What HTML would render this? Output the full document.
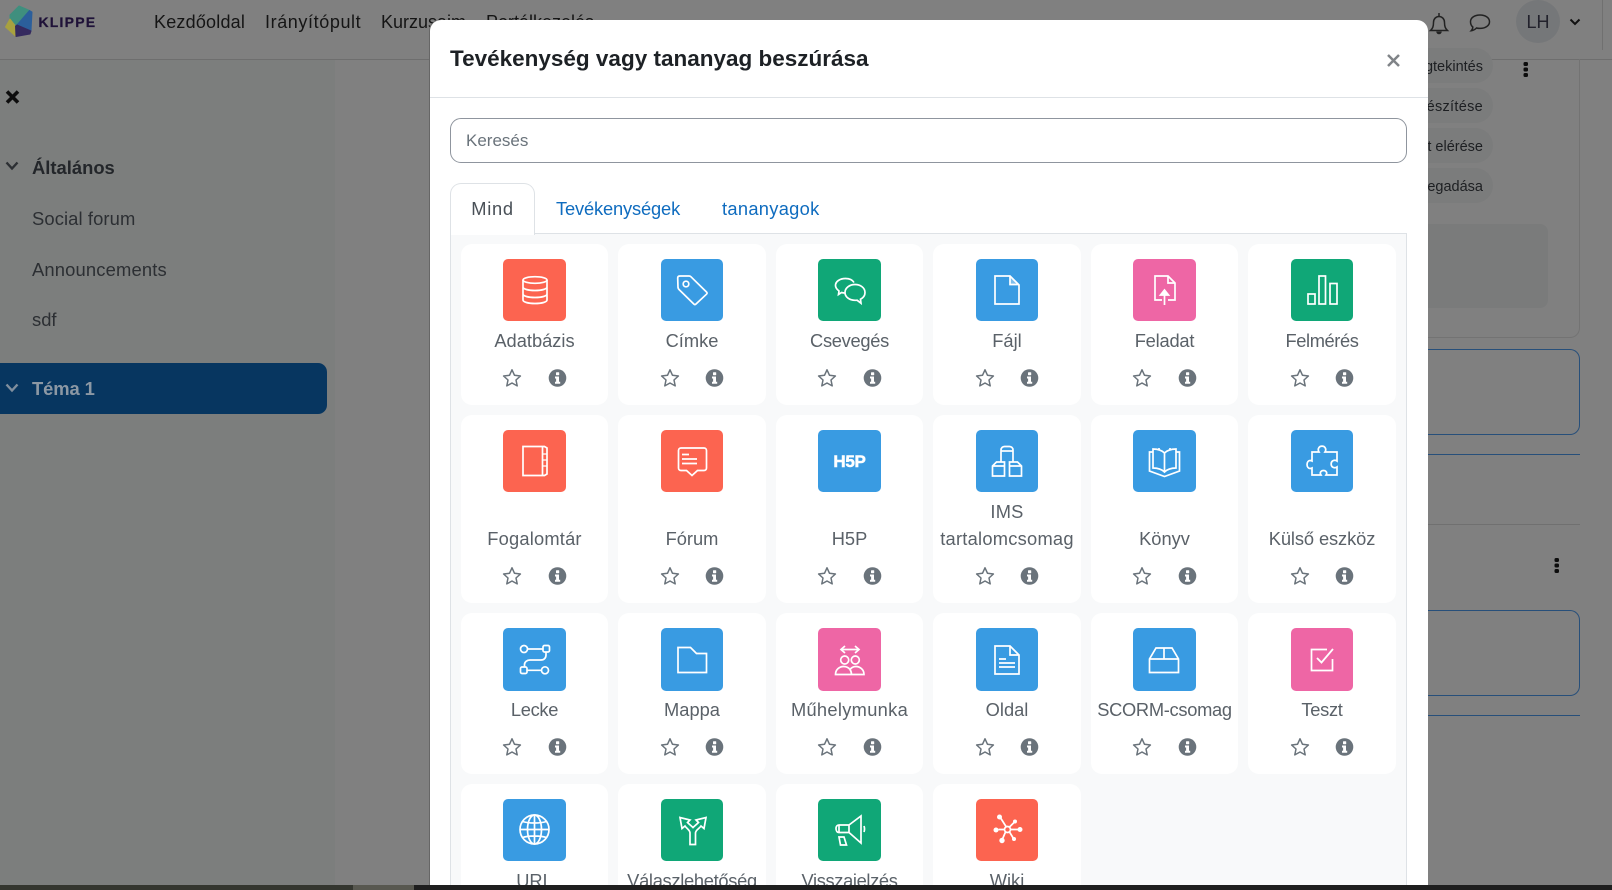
<!DOCTYPE html>
<html lang="hu"><head><meta charset="utf-8"><title>Tevékenység vagy tananyag beszúrása</title>
<style>
html,body{margin:0;padding:0;width:1612px;height:890px;overflow:hidden;background:#808080;font-family:"Liberation Sans",sans-serif}
.a{position:absolute;white-space:nowrap}
#side{left:0;top:60px;width:335px;height:825px;background:#7c7e7d}
#hline{left:0;top:59px;width:1612px;height:1px;background:#6e6e6e}
.nav{top:10px;font-size:18px;line-height:24px;color:#151515}
.sb{left:32px;font-size:18.4px;line-height:24px;color:#2c2f33}
.pill{background:#7b7c7c;border-radius:20px;left:1380px;width:113px;height:35px;top:0;text-align:right;line-height:39px;font-size:14.5px;color:#1d1f22}
.pill span{padding-right:10px}
.bx{left:1400px;width:179px;height:84px;border:1.3px solid #274f7a;border-radius:0 10px 10px 0;border-left:0}
.hl{left:1400px;width:180px;height:1px;background:#274f7a}
#modal{left:430px;top:20px;width:998px;height:865px;background:#fff;border-radius:11px 11px 0 0;overflow:hidden;box-shadow:-1px 0 0 #666}
#modal .in{position:absolute;left:-430px;top:-20px;width:1612px;height:885px;overflow:hidden}
.c{position:absolute;width:147px;background:#fff;border-radius:11px}
.e{width:148px}
.r1{top:244px;height:161px}.r2{top:415px;height:188px}.r3{top:613px;height:161px}.r4{top:784px;height:101px;overflow:hidden;border-radius:11px 11px 0 0}
.t{position:absolute;left:42px;top:15px;width:62.5px;height:62px;border-radius:5px}
.e .t{left:43px;width:61.5px}
.r3 .t{height:63px}
.t svg{display:block;width:62.5px;height:62px;fill:none;stroke:#fff;stroke-width:1.7}
.red{background:#fc6450}.blu{background:#399be2}.grn{background:#10a777}.pnk{background:#ee66a5}
.l{position:absolute;left:-6px;width:159px;text-align:center;font-size:18.3px;line-height:27px;color:#5a6168;top:83px;white-space:nowrap}
.e .l{left:-5.5px}
.r2 .l{top:110px}.r2 .l2{top:83px}.r4 .l{top:83px}
.s,.i{position:absolute;width:20px;height:20px}
.s{left:41px}.i{left:86px}
.e .s{left:41.5px}
.r1 .s,.r1 .i,.r3 .s,.r3 .i{top:123.5px}
.r2 .s,.r2 .i{top:151px}
</style></head><body>
<svg width="0" height="0" style="position:absolute">
<symbol id="star" viewBox="0 0 20 20"><path d="M10 1.8l2.5 5.5 5.9.7-4.4 4 1.2 5.9L10 15l-5.2 2.9L6 12 1.6 8l5.9-.7z" fill="none" stroke="#6a737b" stroke-width="1.5" stroke-linejoin="round"/></symbol>
<symbol id="info" viewBox="0 0 20 20"><circle cx="10.5" cy="10" r="8.8" fill="#6a737b"/><rect x="9" y="4.2" width="3.2" height="3" rx=".6" fill="#fff"/><path d="M8 8.5h4v5.2h1.2v2H8v-2h1.1v-3.2H8z" fill="#fff"/></symbol>
</svg>

<div class="a" id="side"></div>
<div class="a" id="hline"></div>

<!-- logo -->
<svg class="a" style="left:0;top:0" width="40" height="42" viewBox="0 0 40 42" stroke-linejoin="round">
<path d="M19 6L29.500 10.500 17 25 10 22 10 15z" fill="#3f8f7e" stroke="#3f8f7e"/>
<path d="M29.500 10.500L32 12 31 31 17 25z" fill="#2b5f9b" stroke="#2b5f9b"/>
<path d="M5.500 27L10 19 15.500 26 16 36.500z" fill="#a8a13f" stroke="#a8a13f"/>
<path d="M15.500 26L17 25 31 31 30 34 16 36.500z" fill="#352a5f" stroke="#352a5f"/>
</svg>
<div class="a" style="left:38.5px;top:13px;font-size:14px;line-height:18px;font-weight:bold;letter-spacing:1.2px;color:#1f1238;-webkit-text-stroke:.25px #1f1238">KLIPPE</div>

<div class="a nav" style="left:154px;letter-spacing:.2px">Kezdőoldal</div>
<div class="a nav" style="left:265px;letter-spacing:.6px">Irányítópult</div>
<div class="a nav" style="left:381px">Kurzusaim</div>
<div class="a nav" style="left:486px">Portálkezelés</div>

<svg class="a" style="left:1427px;top:11px" width="24" height="24" viewBox="0 0 24 24" fill="none" stroke="#222" stroke-width="1.5"><path d="M3.5 19.5c2-2 3-3.500 3-8 0-3.500 2.300-6 5.500-6s5.500 2.500 5.500 6c0 4.500 1 6 3 8z"/><path d="M10 20.500a2 2 0 0 0 4 0" fill="#222"/><path d="M12 2v3"/></svg>
<svg class="a" style="left:1468px;top:12px" width="24" height="22" viewBox="0 0 24 22" fill="none" stroke="#222" stroke-width="1.5"><path d="M12 3c5.500 0 9.500 2.800 9.500 6.700s-4 6.700-9.500 6.700c-1.300 0-2.400-.1-3.500-.4-1.500 1.500-3 2.500-5.200 2.700 1-1 1.500-2.300 1.500-3.700C3 13.500 2.500 11.700 2.500 9.700 2.500 5.800 6.500 3 12 3z"/></svg>
<div class="a" style="left:1516px;top:0;width:44px;height:43px;border-radius:50%;background:#757779;text-align:center;line-height:45px;font-size:18px;color:#22222c">LH</div>
<svg class="a" style="left:1569px;top:18px" width="12" height="8" viewBox="0 0 12 8" fill="none" stroke="#111" stroke-width="2"><path d="M1.500 1.500L6 6l4.500-4.500"/></svg>
<div class="a" style="left:1602px;top:0;width:1px;height:50px;background:#707070"></div>

<!-- sidebar -->
<svg class="a" style="left:5px;top:90px" width="15" height="14" viewBox="0 0 15 14" fill="none" stroke="#0d0d0d" stroke-width="3.600"><path d="M2 1.500l11 11M13 1.500l-11 11"/></svg>
<svg class="a" style="left:5px;top:161px" width="14" height="10" viewBox="0 0 14 10" fill="none" stroke="#2c2f33" stroke-width="2.400"><path d="M1.500 1.500L7 7.500l5.500-6"/></svg>
<div class="a sb" style="top:155.500px;font-weight:bold;color:#23262a">Általános</div>
<div class="a sb" style="top:207px;letter-spacing:.1px">Social forum</div>
<div class="a sb" style="top:258px;letter-spacing:.15px">Announcements</div>
<div class="a sb" style="top:308px">sdf</div>
<div class="a" style="left:0;top:363px;width:327px;height:51px;background:#073660;border-radius:0 9px 9px 0"></div>
<svg class="a" style="left:5px;top:383px" width="14" height="10" viewBox="0 0 14 10" fill="none" stroke="#808f9e" stroke-width="2.400"><path d="M1.500 1.500L7 7.500l5.500-6"/></svg>
<div class="a sb" style="top:377px;font-weight:bold;color:#8c98a4;letter-spacing:-.1px">Téma 1</div>

<!-- right background content -->
<div class="a" style="left:1400px;top:59px;width:179px;height:278px;border:1px solid #737373;border-left:0;border-top:0;border-radius:0 0 10px 0"></div>
<div class="a pill" style="top:48px"><span>Megtekintés</span></div>
<div class="a pill" style="top:88px;letter-spacing:.3px"><span>készítése</span></div>
<div class="a pill" style="top:128px"><span>Kijelölt elérése</span></div>
<div class="a pill" style="top:168px"><span>Jegy megadása</span></div>
<svg class="a" style="left:1522px;top:60px" width="8" height="18" viewBox="0 0 8 18" fill="#0d0d0d"><rect x="1.500" y="2" width="4.500" height="4" rx="1.500"/><rect x="1.500" y="7.500" width="4.500" height="4" rx="1.500"/><rect x="1.500" y="13" width="4.500" height="4" rx="1.500"/></svg>
<div class="a" style="left:1400px;top:224px;width:148px;height:84px;background:#7a7b7b;border-radius:0 8px 8px 0"></div>
<div class="a bx" style="top:349px"></div>
<div class="a hl" style="top:454px"></div>
<div class="a" style="left:1400px;top:524px;width:180px;height:1px;background:#707070"></div>
<svg class="a" style="left:1553px;top:557px" width="8" height="18" viewBox="0 0 8 18" fill="#0d0d0d"><rect x="1.500" y="1" width="4.500" height="4" rx="1.500"/><rect x="1.500" y="6.500" width="4.500" height="4" rx="1.500"/><rect x="1.500" y="12" width="4.500" height="4" rx="1.500"/></svg>
<div class="a bx" style="top:610px"></div>
<div class="a hl" style="top:715px"></div>

<!-- modal -->
<div class="a" id="modal"><div class="in">
<div class="a" style="left:450px;top:44px;font-size:22.500px;line-height:30px;font-weight:bold;color:#1d2125">Tevékenység vagy tananyag beszúrása</div>
<svg class="a" style="left:1387px;top:54px" width="13" height="13" viewBox="0 0 13 13" fill="none" stroke="#808488" stroke-width="2.500"><path d="M1 1l11 11M12 1L1 12"/></svg>
<div class="a" style="left:430px;top:97px;width:998px;height:1px;background:#dee2e6"></div>
<div class="a" style="left:450px;top:118px;width:955px;height:43px;border:1.300px solid #8f959e;border-radius:11px;line-height:44px;font-size:17px;color:#6a737b;text-indent:15px">Keresés</div>

<div class="a" style="left:450px;top:233px;width:955px;height:652px;background:#f8f9fa;border:1px solid #dee2e6;border-bottom:0"></div>
<div class="a" style="left:450px;top:183px;width:83px;height:51px;border:1px solid #dee2e6;border-bottom:0;border-radius:11px 11px 0 0;background:#fff;text-align:center;line-height:50px;font-size:18.300px;letter-spacing:.7px;color:#495057">Mind</div>
<div class="a" style="left:556px;top:183px;line-height:52px;font-size:18.300px;letter-spacing:-.15px;color:#0f6cbf">Tevékenységek</div>
<div class="a" style="left:722px;top:183px;line-height:52px;font-size:18.300px;letter-spacing:.3px;color:#0f6cbf">tananyagok</div>

<!-- row 1 -->
<div class="c r1" style="left:461px"><div class="t red"><svg viewBox="0 0 62.500 62"><ellipse cx="32" cy="21" rx="12" ry="3.300"/><path d="M20 21v20c0 2 5 3.500 12 3.500s12-1.500 12-3.500V21M20 28c0 2 5 3.500 12 3.500S44 30 44 28M20 35c0 2 5 3.500 12 3.500S44 37 44 35"/></svg></div><div class="l">Adatbázis</div><svg class="s"><use href="#star"/></svg><svg class="i"><use href="#info"/></svg></div>
<div class="c e r1" style="left:618px"><div class="t blu"><svg viewBox="0 0 62.500 62"><path d="M19 17h9c1 0 1.500.3 2 .8L45.500 33c.7.700.7 1.500 0 2.200L35 45c-.7.700-1.500.7-2.200 0L18 30.500c-.6-.6-.9-1.200-1-2l-.3-9.500c0-1.300 1-2 2.300-2z"/><circle cx="25" cy="25" r="2.800"/></svg></div><div class="l">Címke</div><svg class="s"><use href="#star"/></svg><svg class="i"><use href="#info"/></svg></div>
<div class="c r1" style="left:776px"><div class="t grn"><svg viewBox="0 0 62.500 62"><path d="M27 34c-1.500 0-2.500-.2-3.500-.5l-3 2 .5-3.500c-2-1.500-3.500-3.300-3.500-5.500 0-4 4.300-7 10-7 3.700 0 7 1.500 8.500 4"/><path d="M37 25.500c5.500 0 10 3.300 10 8 0 3-1.800 5.300-4.500 6.700l.5 4-4-3c-.7.100-1.300.1-2 .1-5.500 0-10-3.300-10-7.800s4.500-8 10-8z"/></svg></div><div class="l" style="letter-spacing:-.3px">Csevegés</div><svg class="s"><use href="#star"/></svg><svg class="i"><use href="#info"/></svg></div>
<div class="c e r1" style="left:933px"><div class="t blu"><svg viewBox="0 0 62.500 62"><path d="M19 17h15l9 9v19H19z"/><path d="M34 17v8.500h9" fill="#fff" fill-opacity=".35"/></svg></div><div class="l">Fájl</div><svg class="s"><use href="#star"/></svg><svg class="i"><use href="#info"/></svg></div>
<div class="c r1" style="left:1091px"><div class="t pnk"><svg viewBox="0 0 62.500 62"><path d="M29 41h-7V17h13l7 7v17h-7"/><path d="M35 17v7h7"/><path d="M31.500 46V34"/><path d="M27.500 36l4-5 4 5z" fill="#fff"/></svg></div><div class="l" style="letter-spacing:-.2px">Feladat</div><svg class="s"><use href="#star"/></svg><svg class="i"><use href="#info"/></svg></div>
<div class="c e r1" style="left:1248px"><div class="t grn"><svg viewBox="0 0 62.500 62"><rect x="17" y="35" width="7" height="10"/><rect x="28" y="17" width="6.500" height="28"/><rect x="39" y="24.500" width="7" height="20.500"/></svg></div><div class="l" style="letter-spacing:-.4px">Felmérés</div><svg class="s"><use href="#star"/></svg><svg class="i"><use href="#info"/></svg></div>

<!-- row 2 -->
<div class="c r2" style="left:461px"><div class="t red"><svg viewBox="0 0 62.500 62"><path d="M20 16.500h21.500l2.500 1.500v26l-2.500 1.500H20z"/><path d="M39.500 16.500v29"/><path d="M40 24h4M40 30h4M40 36h4" stroke-width="1.200"/></svg></div><div class="l" style="letter-spacing:.2px">Fogalomtár</div><svg class="s"><use href="#star"/></svg><svg class="i"><use href="#info"/></svg></div>
<div class="c e r2" style="left:618px"><div class="t red"><svg viewBox="0 0 62.500 62"><path d="M20 18h23c1.500 0 2.500 1 2.500 2.500v17.500c0 1.500-1 2.500-2.500 2.500h-6.500L31 45.500 25.500 40.500H20c-1.500 0-2.500-1-2.500-2.500V20.500c0-1.500 1-2.500 2.500-2.500z"/><path d="M21 24.500h7M21 29h15M21 33.500h15"/></svg></div><div class="l">Fórum</div><svg class="s"><use href="#star"/></svg><svg class="i"><use href="#info"/></svg></div>
<div class="c r2" style="left:776px"><div class="t blu"><svg viewBox="0 0 62.500 62"><text x="31.500" y="37" text-anchor="middle" font-family="Liberation Sans,sans-serif" font-weight="bold" font-size="17" fill="#fff" stroke="#fff" stroke-width=".5" letter-spacing="-.3">H5P</text></svg></div><div class="l">H5P</div><svg class="s"><use href="#star"/></svg><svg class="i"><use href="#info"/></svg></div>
<div class="c e r2" style="left:933px"><div class="t blu"><svg viewBox="0 0 62.500 62"><path d="M25 32V20c0-2 1.500-3.500 3.500-3.500h5c2 0 3.500 1.500 3.500 3.500v12"/><path d="M25 21h12"/><path d="M16.500 46V36l4-4h8v14zM16.500 36h12M33.500 46V32h8l4 4v10zM33.500 36h12" /></svg></div><div class="l l2" style="letter-spacing:.25px">IMS<br>tartalomcsomag</div><svg class="s"><use href="#star"/></svg><svg class="i"><use href="#info"/></svg></div>
<div class="c r2" style="left:1091px"><div class="t blu"><svg viewBox="0 0 62.500 62"><path d="M31.500 23c-3-3-7-4-11.500-4v19c4.500 0 8.500 1 11.500 4 3-3 7-4 11.500-4V19c-4.500 0-8.500 1-11.500 4zM31.500 23v19"/><path d="M20 22h-3.500v19l15 5.500 15-5.500V22H43"/><path d="M26 18v2M37 18v2"/></svg></div><div class="l">Könyv</div><svg class="s"><use href="#star"/></svg><svg class="i"><use href="#info"/></svg></div>
<div class="c e r2" style="left:1248px"><div class="t blu"><svg viewBox="0 0 62.500 62"><path d="M21 22h7c-1-1.500-1-3 0-4.500 1.300-1.800 4.700-1.800 6 0 1 1.500 1 3 0 4.500h12v9c-1.500-1-3-1-4.500 0-1.800 1.300-1.800 4.700 0 6 1.500 1 3 1 4.500 0v8H35c1-1.500 1-2.500 0-3.500-1.300-1.300-3.700-1.300-5 0-1 1-1 2 0 3.500h-9v-7c-1.500.700-3 .700-4-.5-1.300-1.500-1.300-4.500 0-6 1-1.200 2.500-1.200 4-.5z"/></svg></div><div class="l" style="letter-spacing:-.1px">Külső eszköz</div><svg class="s"><use href="#star"/></svg><svg class="i"><use href="#info"/></svg></div>

<!-- row 3 -->
<div class="c r3" style="left:461px"><div class="t blu"><svg viewBox="0 0 62.500 62"><circle cx="21" cy="21" r="3.500"/><rect x="40" y="17.500" width="6.500" height="6.500" rx="1.500"/><rect x="17.500" y="39" width="6.500" height="6.500" rx="1.500"/><circle cx="42" cy="42.300" r="3.500"/><path d="M24.500 21H40M24 42.300h14.500"/><path d="M43 24v3c0 3-2 5-5 5h-11c-3 0-5.500 2-5.500 4.500V39"/></svg></div><div class="l" style="letter-spacing:-.3px">Lecke</div><svg class="s"><use href="#star"/></svg><svg class="i"><use href="#info"/></svg></div>
<div class="c e r3" style="left:618px"><div class="t blu"><svg viewBox="0 0 62.500 62"><path d="M17 19.500h12.500l6 6h10v19H17z"/></svg></div><div class="l">Mappa</div><svg class="s"><use href="#star"/></svg><svg class="i"><use href="#info"/></svg></div>
<div class="c r3" style="left:776px"><div class="t pnk"><svg viewBox="0 0 62.500 62"><path d="M24 21.500h16"/><path d="M27 18l-4 3.500 4 3.500M37 18l4 3.500-4 3.500"/><circle cx="26.700" cy="32" r="4"/><circle cx="37.300" cy="32" r="4"/><path d="M17.500 46.500c0-5 4-8 8-8 3 0 5 1 6.500 3 1.500-2 3.500-3 6-3 4 0 8 3 8 8z"/><path d="M32 41.500c1 1.500 1.500 3 1.500 5"/></svg></div><div class="l" style="letter-spacing:.3px">Műhelymunka</div><svg class="s"><use href="#star"/></svg><svg class="i"><use href="#info"/></svg></div>
<div class="c e r3" style="left:933px"><div class="t blu"><svg viewBox="0 0 62.500 62"><path d="M19 18h15l9 9v19H19z"/><path d="M34 18v9h9M23 31h7M23 35h16M23 39h16"/></svg></div><div class="l">Oldal</div><svg class="s"><use href="#star"/></svg><svg class="i"><use href="#info"/></svg></div>
<div class="c r3" style="left:1091px"><div class="t blu"><svg viewBox="0 0 62.500 62"><path d="M16.500 31v13.500h29V31l-6.500-11H23zM16.500 31h29M31 20v11"/></svg></div><div class="l" style="letter-spacing:-.3px">SCORM-csomag</div><svg class="s"><use href="#star"/></svg><svg class="i"><use href="#info"/></svg></div>
<div class="c e r3" style="left:1248px"><div class="t pnk"><svg viewBox="0 0 62.500 62"><path d="M36 21.500H20.500v21h21V31"/><path d="M26 30l4.500 4.500L42 21" stroke-width="1.800"/></svg></div><div class="l" style="letter-spacing:-.3px">Teszt</div><svg class="s"><use href="#star"/></svg><svg class="i"><use href="#info"/></svg></div>

<!-- row 4 -->
<div class="c r4" style="left:461px"><div class="t blu"><svg viewBox="0 0 62.500 62"><circle cx="31.500" cy="30.500" r="14.500"/><ellipse cx="31.500" cy="30.500" rx="7" ry="14.500"/><path d="M17 30.500h29M19.500 22.500c6 2 18 2 24 0M19.500 38.500c6-2 18-2 24 0M31.500 16v29"/></svg></div><div class="l">URL</div></div>
<div class="c e r4" style="left:618px"><div class="t grn"><svg viewBox="0 0 62.500 62"><path d="M29 45.500h5.500V34c0-3 4-4.500 5.500-7l3 2.500 2-11-10 2.500 2.500 2.500c-2 2-4 3.500-5.500 5-1.500-1.500-3.500-3-5.500-5l2.500-2.500-10-2.500 2 11 3-2.500c1.500 2.500 5 4 5 7z"/></svg></div><div class="l" style="letter-spacing:-.3px">Válaszlehetőség</div></div>
<div class="c r4" style="left:776px"><div class="t grn"><svg viewBox="0 0 62.500 62"><path d="M43 17v27L31 33.500V26zM31 26H21c-2 0-3 1.500-3 3.500s1 4 3 4h10zM21 26v7.500"/><path d="M21 38h5l2.500 8h-6z"/><path d="M46 27c.7 2 .7 4 0 6"/></svg></div><div class="l" style="letter-spacing:-.35px">Visszajelzés</div></div>
<div class="c e r4" style="left:933px"><div class="t red"><svg viewBox="0 0 62.500 62"><circle cx="31.500" cy="30.500" r="3"/><path d="M30 27.500L24 18M33.500 28l5-5M34.500 30.500h8M33.500 33l4 6.500M29.500 33l-3 7M28.500 30.500h-6"/><g fill="#fff" stroke="none"><circle cx="23.500" cy="18" r="2.500"/><circle cx="39" cy="22.500" r="2"/><circle cx="44" cy="30.500" r="2.500"/><circle cx="38" cy="40" r="2"/><circle cx="26" cy="41.500" r="2.700"/><circle cx="20" cy="31" r="2.500"/></g></svg></div><div class="l">Wiki</div></div>
</div></div>

<!-- bottom strip -->
<div class="a" style="left:0;top:885px;width:1612px;height:5px;background:#1f1f1f"></div>
<div class="a" style="left:0;top:885px;width:353px;height:5px;background:#34362f"></div>
<div class="a" style="left:353px;top:885px;width:61px;height:5px;background:#585850"></div>
</body></html>
